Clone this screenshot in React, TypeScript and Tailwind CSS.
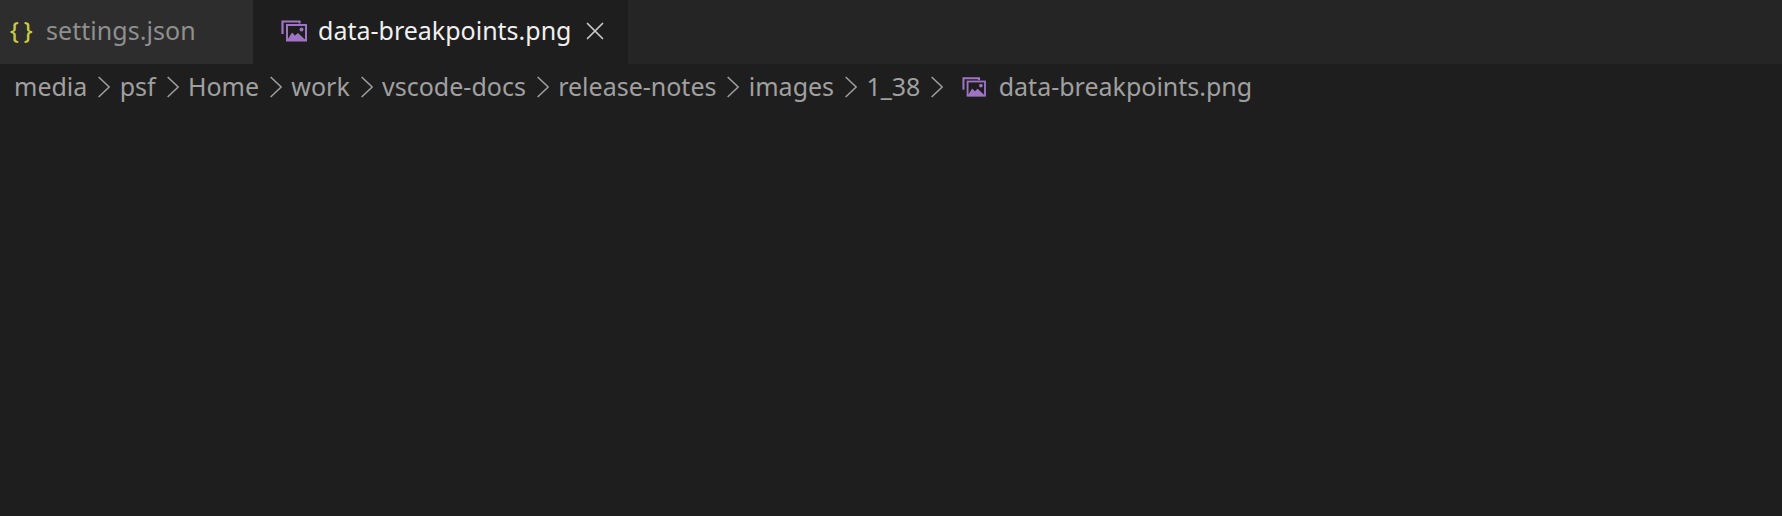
import { X } from 'lucide-react';

const crumbs = ['media', 'psf', 'Home', 'work', 'vscode-docs', 'release-notes', 'images', '1_38'];

function ImageIcon({ className }: { className?: string }) {
  return (
    <svg viewBox="0 0 26 24" className={className} fill="none">
      <path d="M1.5 15V2.5H18.5V4.5" stroke="#a074c4" strokeWidth="2.2" />
      <rect x="6" y="6" width="19" height="15.5" stroke="#a074c4" strokeWidth="2" fill="#1e1e1e" />
      <path d="M6 21.5L11 13.5L14 16.5L17 14L25 21.5Z" fill="#a074c4" />
      <circle cx="20.5" cy="10.5" r="2" fill="#a074c4" />
    </svg>
  );
}

function Chevron() {
  return (
    <svg viewBox="0 0 32 26" className="h-[26px] w-[32.3px] shrink-0" fill="none">
      <path d="M11.5 3L22 13L11.5 23" stroke="#a0a0a0" strokeWidth="1.5" />
    </svg>
  );
}

export default function App() {
  return (
    <div className="h-[516px] w-[1782px] overflow-hidden bg-[#1e1e1e] font-['Noto_Sans',sans-serif]">
      {/* Tabs */}
      <div className="flex h-[64px] bg-[#252526]">
        <div className="flex w-[253px] items-center bg-[#2d2d2d] pb-[3px] pl-[10px]">
          <span className="w-[36px] text-[23px] font-medium tracking-[-0.5px] text-[#cbcb41]">{'{ }'}</span>
          <span className="text-[25px] tracking-[0.05px] text-[#8f8f8f]">settings.json</span>
        </div>
        <div className="flex w-[375px] items-center bg-[#1e1e1e] pb-[3px] pl-[28px]">
          <ImageIcon className="h-[24px] w-[26px]" />
          <span className="ml-[11px] text-[25px] text-[#f0f0f0]">data-breakpoints.png</span>
          <X className="ml-[9px] h-[30px] w-[30px] text-[#c8c8c8]" strokeWidth={1.4} />
        </div>
      </div>

      {/* Breadcrumbs */}
      <div className="flex h-[46px] items-center pl-[14px] text-[25px] text-[#a0a0a0]">
        {crumbs.map((c) => (
          <div key={c} className="flex items-center">
            <span>{c}</span>
            <Chevron />
          </div>
        ))}
        <ImageIcon className="ml-[8px] h-[22px] w-[26px]" />
        <span className="ml-[12px]">data-breakpoints.png</span>
      </div>
    </div>
  );
}
